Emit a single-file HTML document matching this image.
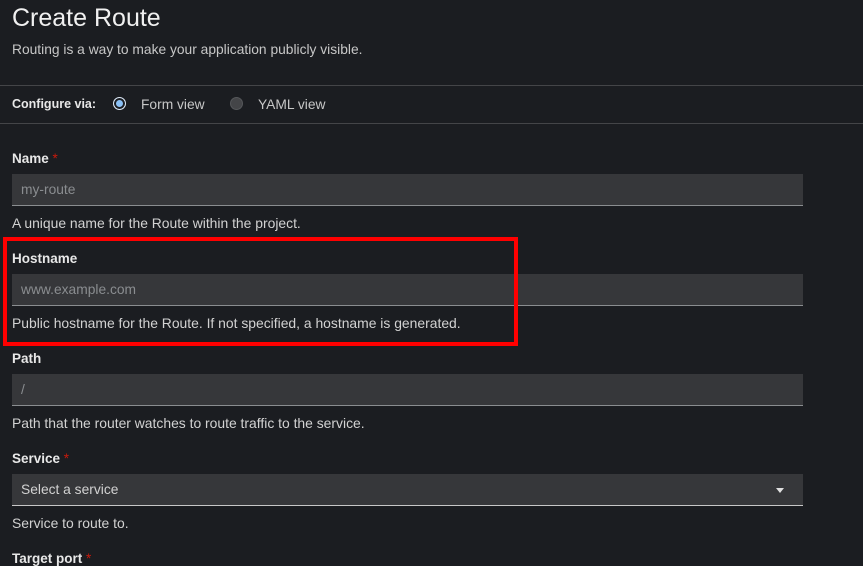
<!DOCTYPE html>
<html><head><style>
body{margin:0;width:863px;height:557px;overflow:hidden;background:#1b1d21;font-family:"Liberation Sans",sans-serif;color:#e0e0e0;position:relative}
.a{position:absolute;white-space:nowrap}
h1{position:absolute;left:12px;top:4px;margin:0;font-size:25px;font-weight:normal;color:#f0f0f0}
.sub{left:12px;top:42px;font-size:13.8px;color:#c7c7c7}
.hr{position:absolute;left:0;width:863px;height:1px;background:#444548}
.lbl{left:12px;font-size:13.5px;font-weight:bold;color:#e8e8e8}
.req{color:#c9190b;font-weight:normal}
.inp{position:absolute;left:12px;width:791px;height:31px;background:#36373a;border-bottom:1px solid #8a8d90;box-sizing:content-box}
.inp span{position:absolute;left:9px;top:8px;font-size:13.8px;color:#8a8d90}
.help{left:12px;font-size:13.9px;color:#d2d2d2}
.radio{position:absolute;width:11px;height:11px;border-radius:50%}
</style></head><body>
<h1>Create Route</h1>
<div class="a sub">Routing is a way to make your application publicly visible.</div>
<div class="hr" style="top:85px"></div>
<div class="a lbl" style="top:97px;font-size:12.5px">Configure via:</div>
<div class="radio" style="left:113px;top:97px;background:#8bc1f7;border:1px solid #dfe9f5;box-shadow:inset 0 0 0 2px #1b1d21"></div>
<div class="a" style="left:141px;top:97px;font-size:13.8px;color:#c7c7c7">Form view</div>
<div class="radio" style="left:230px;top:97px;background:#444548;border:1px solid #55575a"></div>
<div class="a" style="left:258px;top:97px;font-size:13.8px;color:#c7c7c7">YAML view</div>
<div class="hr" style="top:123px"></div>

<div class="a lbl" style="top:151px">Name <span class="req">*</span></div>
<div class="inp" style="top:174px"><span>my-route</span></div>
<div class="a help" style="top:215px">A unique name for the Route within the project.</div>

<div class="a lbl" style="top:251px">Hostname</div>
<div class="inp" style="top:274px"><span>www.example.com</span></div>
<div class="a help" style="top:315px">Public hostname for the Route. If not specified, a hostname is generated.</div>
<div style="position:absolute;left:3px;top:237px;width:507px;height:101px;border:4px solid #ff0000"></div>

<div class="a lbl" style="top:351px">Path</div>
<div class="inp" style="top:374px"><span>/</span></div>
<div class="a help" style="top:415px">Path that the router watches to route traffic to the service.</div>

<div class="a lbl" style="top:451px">Service <span class="req">*</span></div>
<div class="inp" style="top:474px;border-bottom-color:#c7c7c7"><span style="color:#d2d2d2">Select a service</span>
<div style="position:absolute;right:19px;top:14px;width:0;height:0;border-left:4px solid transparent;border-right:4px solid transparent;border-top:5px solid #e0e0e0"></div></div>
<div class="a help" style="top:515px">Service to route to.</div>
<div class="a lbl" style="top:551px">Target port <span class="req">*</span></div>
</body></html>
